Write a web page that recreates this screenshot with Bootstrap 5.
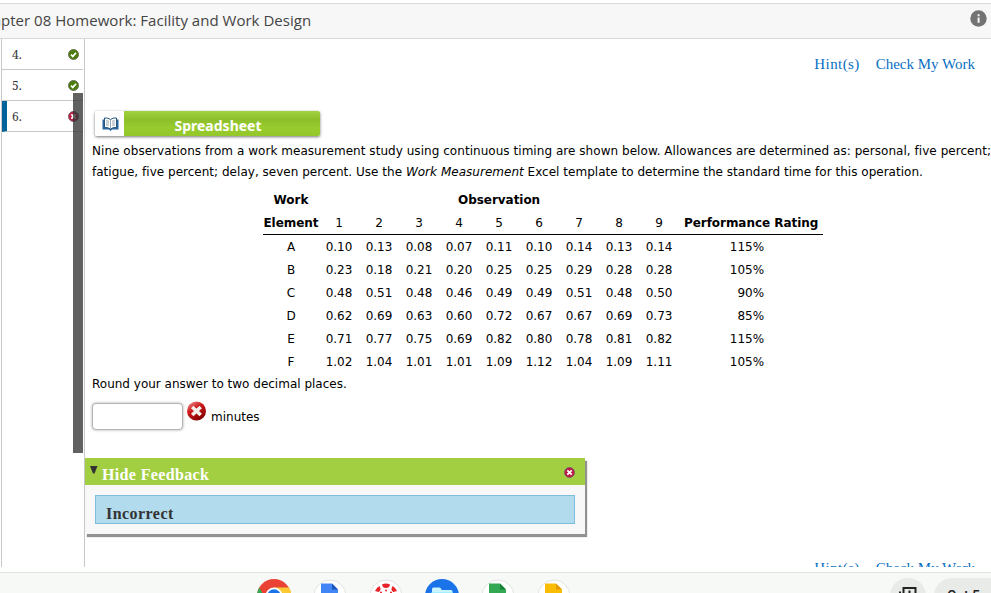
<!DOCTYPE html>
<html lang="en">
<head>
<meta charset="utf-8">
<meta name="viewport" content="width=device-width, initial-scale=1">
<title>Chapter 08 Homework: Facility and Work Design</title>
<link rel="stylesheet" href="https://cdn.jsdelivr.net/npm/bootstrap@5.3.0/dist/css/bootstrap.min.css">
<style>
body{height:593px;font:12px/21px "DejaVu Sans",sans-serif;color:#000}
.title-bar{height:36px;margin-top:3px;background:#f7f7f7;border-top:1px solid #d9d9d9;border-bottom:1px solid #d9d9d9;padding:0 4px 0 0;font:15px/32px "Open Sans",sans-serif;color:#444}
.title-bar h1{font:inherit;letter-spacing:.02px;margin:0 0 0 -26px;white-space:nowrap}
.info{margin-top:6px}
.work-area{height:528px}
.steps{width:83px;border-left:1px solid #c8c8c8;margin-left:1px;font:12px/30px "Noto Serif","Liberation Serif",serif;color:#333}
.step{height:31px;border-bottom:1px solid #c8c8c8;padding:1px 4px 0 10px;margin-right:1px}
.step.current{border-left:5px solid #00639a;padding-left:5px}
.thumb{left:71px;top:54px;width:10px;height:360px;background:rgba(52,52,54,.78)}
.question{border-left:1px solid #c8c8c8;min-width:0}
.work-links{font:15px/20px "Liberation Serif",serif;gap:16px;padding:0 16px 0 0}
.work-links a{color:#0a6fc2;text-decoration:none}
.work-links a:first-child{letter-spacing:.4px}
.top-links{padding-top:15px}
.sheet-btn{width:225px;height:25px;margin:37px 0 0 10px;box-shadow:0 1px 3px #777;border-radius:2px;background:linear-gradient(90deg,#fff,#f1f1f3)}
.sheet-btn b{background:linear-gradient(#a2d13f,#8dbf2b 35%,#98cb2d 65%,#94c72b);color:#fff;font:bold 14px/29px "Noto Sans",sans-serif;text-align:center;border-radius:0 2px 2px 0;padding-right:8px}
.sheet-icon{width:29px;padding:2px 0 0 2px}
.prose{margin:5px 0 0 7px;white-space:nowrap}
.line-a{letter-spacing:.045px}
.line-b{letter-spacing:.02px}
.observations{width:560px;margin:6px 0 0 178px;table-layout:fixed;line-height:23px}
.observations th,.observations td{padding:0;text-align:center;height:23px;white-space:nowrap}
.observations th{letter-spacing:-.04px}
.observations thead tr:last-child>*{box-shadow:inset 0 -1px #000}
.observations tbody tr:first-child td{padding-top:1px}
.observations tbody td:last-child{text-align:right;padding-right:59px}
.answer-row{margin:8px 0 0 7px;height:27px}
.answer-box{width:91px;height:27px;border:1px solid #b4b4b4;border-radius:4px;box-shadow:0 0 3px #aaa;padding:0}
.feedback{width:500px;height:76px;margin:28px 0 0 0;background:#f8f8f8;box-shadow:2px 3px 1px #929292;font-family:"Liberation Serif",serif;font-weight:bold}
.feedback-head{height:27px;background:#a2ce42;color:#fff;font-size:16px;letter-spacing:.36px;line-height:33px;padding:0 10px 0 5px}
.feedback-close{margin-top:9px}
.feedback-msg{height:29px;margin:10px;background:#b2dbed;border:1px solid #7ebddb;color:#333;font-size:16px;letter-spacing:.45px;line-height:35px;padding-left:10px}
.second-links{height:9px;margin-top:24px;overflow:hidden}
.shelf{height:21px;margin-top:5px;background:#f7f9f7;border-top:1px solid #e2e4e2;padding-left:257px}
.shelf svg{flex:none}
.apps{gap:22px;margin-top:6px}
.tote{width:36px;height:36px;border-radius:50%;background:#e9ebe9;margin:5px 8px 0 319px;flex:none}
.clock{width:100px;height:36px;border-radius:18px 0 0 18px;background:#e9ebe9;margin-top:5px;padding-left:13px;font:500 14px/36px Roboto,sans-serif;flex:none;color:#222;white-space:nowrap}
</style>
<script src="https://cdn.jsdelivr.net/npm/bootstrap@5.3.0/dist/js/bootstrap.bundle.min.js"></script>
</head>
<body class="d-flex flex-column overflow-hidden bg-white">
<svg width="0" height="0" class="position-absolute">
<defs>
<linearGradient id="redball" x1="0" y1="0" x2=".6" y2="1"><stop stop-color="#f0a0a0"/><stop offset=".45" stop-color="#cf1b1b"/><stop offset="1" stop-color="#850000"/></linearGradient>
<symbol id="ok" viewBox="0 0 11 11"><circle cx="5.500" cy="5.500" r="5" fill="#4c7c0b" stroke="#67705a"/><path d="M3 5.600 4.800 7.400 8 3.700" fill="none" stroke="#fff" stroke-width="1.700"/></symbol>
<symbol id="bad" viewBox="0 0 11 11"><circle cx="5.500" cy="5.500" r="5" fill="#bd1742" stroke="#80626a"/><path d="M3.300 3.300 7.700 7.700M7.700 3.300 3.300 7.700" stroke="#fff" stroke-width="1.900"/></symbol>
</defs>
</svg>
<header class="title-bar d-flex justify-content-between flex-shrink-0">
<h1>Chapter 08 Homework: Facility and Work Design</h1>
<svg class="info" width="17" height="17" viewBox="0 0 17 17"><circle cx="8.500" cy="8.500" r="8.200" fill="#737373"/><path d="M7.600 4.200h2v2h-2zM7.600 7.500h2v5.200h-2z" fill="#f7f7f7"/></svg>
</header>
<main class="work-area d-flex flex-shrink-0 overflow-hidden">
<nav class="steps position-relative flex-shrink-0">
<div class="step d-flex justify-content-between align-items-center"><span>4.</span><svg width="11" height="11"><use href="#ok"/></svg></div>
<div class="step d-flex justify-content-between align-items-center"><span>5.</span><svg width="11" height="11"><use href="#ok"/></svg></div>
<div class="step current d-flex justify-content-between align-items-center"><span>6.</span><svg width="11" height="11"><use href="#bad"/></svg></div>
<div class="thumb position-absolute"></div>
</nav>
<section class="question flex-grow-1">
<div class="work-links top-links d-flex justify-content-end"><a href="#">Hint(s)</a><a href="#">Check My Work</a></div>
<div class="sheet-btn d-flex">
<span class="sheet-icon d-flex align-items-center justify-content-center"><svg width="17" height="15" viewBox="0 0 17 15"><path d="M.5 2.500h16v10H10l-1.500 1.500L7 12.500H.5z" fill="#2a659f"/><path d="M2.500 1Q6 .5 8.500 2.500 11 .5 14.500 1v9.500Q11 10 8.500 12 6 10 2.500 10.500z" fill="#fff" stroke="#245681"/><path d="M8.500 2.500V12M4 4h3M4 6h3M4 8h3M10 4h3M10 6h3M10 8h3" stroke="#98a5b0"/></svg></span>
<b class="flex-grow-1">Spreadsheet</b>
</div>
<p class="prose mb-0"><span class="line-a">Nine observations from a work measurement study using continuous timing are shown below. Allowances are determined as: personal, five percent;</span><br><span class="line-b">fatigue, five percent; delay, seven percent. Use the <i>Work Measurement</i> Excel template to determine the standard time for this operation.</span></p>
<table class="observations">
<colgroup><col style="width:56px"><col span="9" style="width:40px"><col style="width:144px"></colgroup>
<thead>
<tr><th>Work</th><th colspan="9">Observation</th><th></th></tr>
<tr><th>Element</th><td>1</td><td>2</td><td>3</td><td>4</td><td>5</td><td>6</td><td>7</td><td>8</td><td>9</td><th>Performance Rating</th></tr>
</thead>
<tbody>
<tr><td>A</td><td>0.10</td><td>0.13</td><td>0.08</td><td>0.07</td><td>0.11</td><td>0.10</td><td>0.14</td><td>0.13</td><td>0.14</td><td>115%</td></tr>
<tr><td>B</td><td>0.23</td><td>0.18</td><td>0.21</td><td>0.20</td><td>0.25</td><td>0.25</td><td>0.29</td><td>0.28</td><td>0.28</td><td>105%</td></tr>
<tr><td>C</td><td>0.48</td><td>0.51</td><td>0.48</td><td>0.46</td><td>0.49</td><td>0.49</td><td>0.51</td><td>0.48</td><td>0.50</td><td>90%</td></tr>
<tr><td>D</td><td>0.62</td><td>0.69</td><td>0.63</td><td>0.60</td><td>0.72</td><td>0.67</td><td>0.67</td><td>0.69</td><td>0.73</td><td>85%</td></tr>
<tr><td>E</td><td>0.71</td><td>0.77</td><td>0.75</td><td>0.69</td><td>0.82</td><td>0.80</td><td>0.78</td><td>0.81</td><td>0.82</td><td>115%</td></tr>
<tr><td>F</td><td>1.02</td><td>1.04</td><td>1.01</td><td>1.01</td><td>1.09</td><td>1.12</td><td>1.04</td><td>1.09</td><td>1.11</td><td>105%</td></tr>
</tbody>
</table>
<p class="prose mb-0 mt-0">Round your answer to two decimal places.</p>
<div class="answer-row d-flex">
<input class="answer-box" type="text" aria-label="Answer in minutes">
<svg class="ms-1 flex-shrink-0" width="20" height="20" viewBox="0 0 20 20" overflow="visible"><g transform="translate(-.8 -2)"><circle cx="10.300" cy="10" r="9.500" fill="url(#redball)"/><path d="M6 6 14.500 14M14.500 6 6 14" stroke="#f4eeea" stroke-width="3.600"/></g></svg>
<span class="pt-1 ms-1">minutes</span>
</div>
<div class="feedback">
<div class="feedback-head d-flex"><svg width="8" height="8" class="mt-2"><path d="M0 0h7.500L4.500 7.500H3z" fill="#333"/></svg><span class="ms-1">Hide Feedback</span><svg class="feedback-close ms-auto" width="11" height="11"><use href="#bad"/></svg></div>
<div class="feedback-msg">Incorrect</div>
</div>
<div class="second-links"><div class="work-links d-flex justify-content-end"><a href="#">Hint(s)</a><a href="#">Check My Work</a></div></div>
</section>
</main>
<footer class="shelf d-flex flex-shrink-0 overflow-hidden">
<div class="apps d-flex">
<svg width="34" height="34" viewBox="0 0 34 34"><circle cx="17" cy="17" r="17" fill="#ea4335"/><path d="M17 8.500H32A17 17 0 0 1 17 34z" fill="#fbc934"/><path d="M2.300 8.500 17 34A17 17 0 0 1 2.300 8.500z" fill="#34a853"/><circle cx="17" cy="17" r="8.500" fill="#fff"/><circle cx="17" cy="17" r="6.700" fill="#1a73e8"/></svg>
<svg width="34" height="34" viewBox="0 0 34 34"><circle cx="17" cy="17" r="16" fill="#fff" stroke="#e1e3e1"/><path d="M8 4.500h11l6 6V28H8z" fill="#4285f4"/><path d="M19 4.500l6 6h-6z" fill="#1b57bd"/></svg>
<svg width="34" height="34" viewBox="0 0 34 34"><circle cx="17" cy="17" r="16" fill="#fff" stroke="#e1e3e1"/><g fill="#e72429"><path d="M13 5.500Q17 3.500 21 5.500 20.500 9 17 9T13 5.500zM6 12Q8 8 10.500 7 13 11 9.500 13zM28 12Q26 8 23.500 7 21 11 24.500 13z"/><circle cx="17" cy="11.500" r="1"/><circle cx="12" cy="13.500" r="1"/><circle cx="22" cy="13.500" r="1"/></g></svg>
<svg width="34" height="34" viewBox="0 0 34 34"><circle cx="17" cy="17" r="17" fill="#1a73e8"/><path d="M7 26V10q0-1.500 1.500-1.500H15l2 2.500h9q1.500 0 1.500 1.500V26z" fill="#c8f4ff"/><path d="M6 13.500h22V27H6z" fill="#80eaff"/></svg>
<svg width="34" height="34" viewBox="0 0 34 34"><circle cx="17" cy="17" r="16" fill="#fff" stroke="#e1e3e1"/><path d="M8 4.500h11l6 6V28H8z" fill="#34a853"/><path d="M19 4.500l6 6h-6z" fill="#188038"/></svg>
<svg width="34" height="34" viewBox="0 0 34 34"><circle cx="17" cy="17" r="16" fill="#fff" stroke="#e1e3e1"/><path d="M8 4.500h11l6 6V28H8z" fill="#fbbc04"/><path d="M19 4.500l6 6h-6z" fill="#e39b00"/></svg>
</div>
<div class="tote"><svg width="36" height="36" viewBox="0 0 36 36" fill="none" stroke="#222" stroke-width="2"><path d="M13.500 10H25.500V22H13.500zM10 13.500V26H22M19.500 12.500v7M16 16h7"/></svg></div>
<div class="clock">Oct 5</div>
</footer>
</body>
</html>
